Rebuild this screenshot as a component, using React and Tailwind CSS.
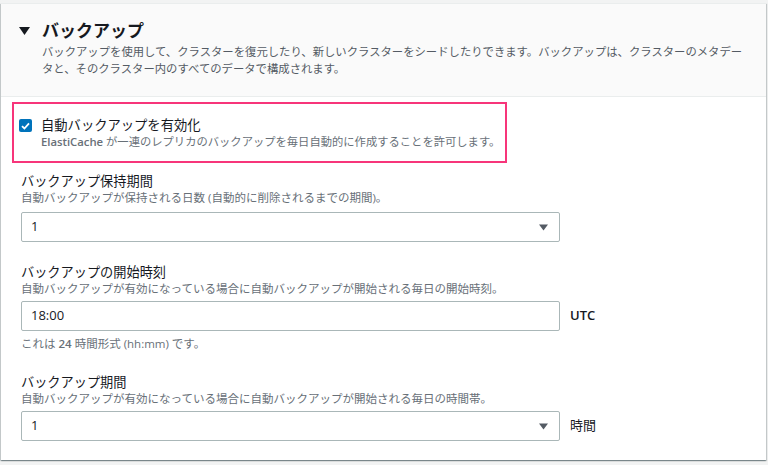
import { useState } from 'react';

const FONT = { fontFamily: '"Open Sans", "Noto Sans CJK JP", sans-serif' };

function Flecha() {
  return (
    <svg width="9" height="7" viewBox="0 0 9 7" className="shrink-0">
      <path d="M0 0.5 H9 L4.5 6.5 Z" fill="#545b64" />
    </svg>
  );
}

function Campo({ titulo, descripcion, children, className }) {
  return (
    <div className={className}>
      <div className="text-[13.2px] leading-[17px] text-[#16191f]">{titulo}</div>
      <div className="text-[11.5px] leading-[15px] text-[#687078]">{descripcion}</div>
      {children}
    </div>
  );
}

export default function App() {
  const [activo, setActivo] = useState(true);

  return (
    <div className="min-h-[465px] w-[768px] bg-[#f2f3f3] pt-[3px] pl-[1px] pr-[2px] pb-px" style={FONT}>
      <div className="border-t border-[#eaeded] bg-white shadow-[0_1px_1px_0_rgba(0,28,36,0.3),1px_1px_1px_0_rgba(0,28,36,0.15),-1px_1px_1px_0_rgba(0,28,36,0.15)]">
        <div className="border-b border-[#eaeded] bg-[#fafafa] pl-[18px] pr-4 pt-[15px] pb-[19px]">
          <div className="flex items-center">
            <svg width="11" height="8" viewBox="0 0 11 8" className="mr-[12px]">
              <path d="M0 0 H11 L5.5 8 Z" fill="#16191f" />
            </svg>
            <h2 className="text-[17px] leading-[24px] font-bold text-[#16191f]">バックアップ</h2>
          </div>
          <p className="ml-[23px] whitespace-nowrap text-[11.35px] leading-[17px] text-[#545b64]">
            バックアップを使用して、クラスターを復元したり、新しいクラスターをシードしたりできます。バックアップは、クラスターのメタデー
            <br />
            タと、そのクラスター内のすべてのデータで構成されます。
          </p>
        </div>

        <div className="pl-[11px] pt-[5px] pb-[19px]">
          <div className="w-[495px] border-2 border-[#f7357a] pl-[5px] pt-[13px] pb-[12px]">
            <label className="flex items-start">
              <button
                type="button"
                onClick={() => setActivo(!activo)}
                className={`mt-[2px] flex h-[13px] w-[13px] items-center justify-center rounded-[2px] ${
                  activo ? 'bg-[#0073bb]' : 'border border-[#aab7b8] bg-white'
                }`}
              >
                {activo && (
                  <svg width="9" height="8" viewBox="0 0 9 8">
                    <path d="M1 4.2 L3.4 6.5 L8 1.3" stroke="white" strokeWidth="1.8" fill="none" />
                  </svg>
                )}
              </button>
              <div className="ml-[9px]">
                <div className="text-[13.3px] leading-[17px] text-[#16191f]">自動バックアップを有効化</div>
                <div className="text-[11.3px] leading-[15px] text-[#687078]">
                  <span className="font-semibold">ElastiCache</span> が一連のレプリカのバックアップを毎日自動的に作成することを許可します。
                </div>
              </div>
            </label>
          </div>

          <div className="pl-[9px]">
            <Campo
              className="mt-[10px]"
              titulo="バックアップ保持期間"
              descripcion="自動バックアップが保持される日数 (自動的に削除されるまでの期間)。"
            >
              <div className="mt-[7px] flex h-[30px] w-[539px] items-center justify-between rounded-[2px] border border-[#aab7b8] pl-[9px] pr-[11px]">
                <span className="text-[13px] font-medium text-[#16191f]">1</span>
                <Flecha />
              </div>
            </Campo>

            <Campo
              className="mt-[22px]"
              titulo="バックアップの開始時刻"
              descripcion="自動バックアップが有効になっている場合に自動バックアップが開始される毎日の開始時刻。"
            >
              <div className="mt-[5px] flex items-center">
                <div className="flex h-[30px] w-[539px] items-center rounded-[2px] border border-[#aab7b8] pl-[9px]">
                  <span className="text-[13px] font-medium text-[#16191f]">18:00</span>
                </div>
                <span className="ml-[10px] text-[13px] font-semibold text-[#16191f]">UTC</span>
              </div>
              <div className="mt-[5px] text-[11.5px] leading-[15px] text-[#687078]">
                これは <span className="font-semibold">24</span> 時間形式 (hh:mm) です。
              </div>
            </Campo>

            <Campo
              className="mt-[23px]"
              titulo="バックアップ期間"
              descripcion="自動バックアップが有効になっている場合に自動バックアップが開始される毎日の時間帯。"
            >
              <div className="mt-[5px] flex items-center">
                <div className="flex h-[30px] w-[539px] items-center justify-between rounded-[2px] border border-[#aab7b8] pl-[9px] pr-[11px]">
                  <span className="text-[13px] font-medium text-[#16191f]">1</span>
                  <Flecha />
                </div>
                <span className="ml-[10px] text-[13px] text-[#16191f]">時間</span>
              </div>
            </Campo>
          </div>
        </div>
      </div>
    </div>
  );
}
